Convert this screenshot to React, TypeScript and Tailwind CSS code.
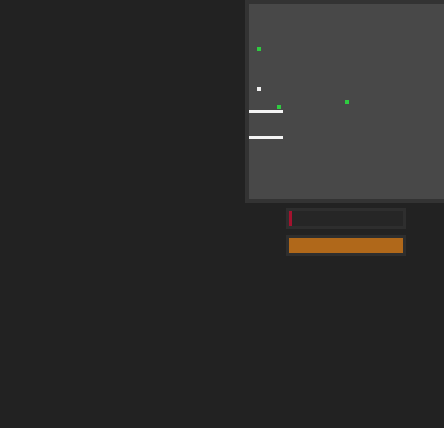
import React from 'react';

const particles = [
  { x: 8, y: 43, c: 'bg-[#2ecc40]' },
  { x: 28, y: 101, c: 'bg-[#2ecc40]' },
  { x: 96, y: 96, c: 'bg-[#2ecc40]' },
  { x: 8, y: 83, c: 'bg-[#f0f0f0]' },
];

function Meter({ pct, fill }: { pct: number; fill: string }) {
  return (
    <div className="w-[120px] h-[21px] p-[3px] bg-[#2e2e2e]">
      <div className="w-full h-full bg-[#262626]">
        <div className={`h-full ${fill}`} style={{ width: `${pct}%` }} />
      </div>
    </div>
  );
}

export default function App() {
  return (
    <div className="w-[444px] h-[428px] bg-[#222222] overflow-hidden pl-[245px]">
      <div className="flex flex-col w-[240px]">
        {/* play area */}
        <div className="relative w-[240px] h-[203px] border-4 border-[#333333] bg-[#484848]">
          {particles.map((p, i) => (
            <div
              key={i}
              className={`absolute w-[4px] h-[4px] ${p.c}`}
              style={{ left: p.x, top: p.y }}
            />
          ))}
          <div className="absolute left-0 top-[106px] w-[34px] h-[3px] bg-[#f4f4f4]" />
          <div className="absolute left-0 top-[132px] w-[34px] h-[3px] bg-[#f4f4f4]" />
        </div>

        {/* health / energy */}
        <div className="flex flex-col gap-[6px] mt-[5px] ml-[41px]">
          <Meter pct={3} fill="bg-[#a3122e]" />
          <Meter pct={100} fill="bg-[#b0681a]" />
        </div>
      </div>
    </div>
  );
}
